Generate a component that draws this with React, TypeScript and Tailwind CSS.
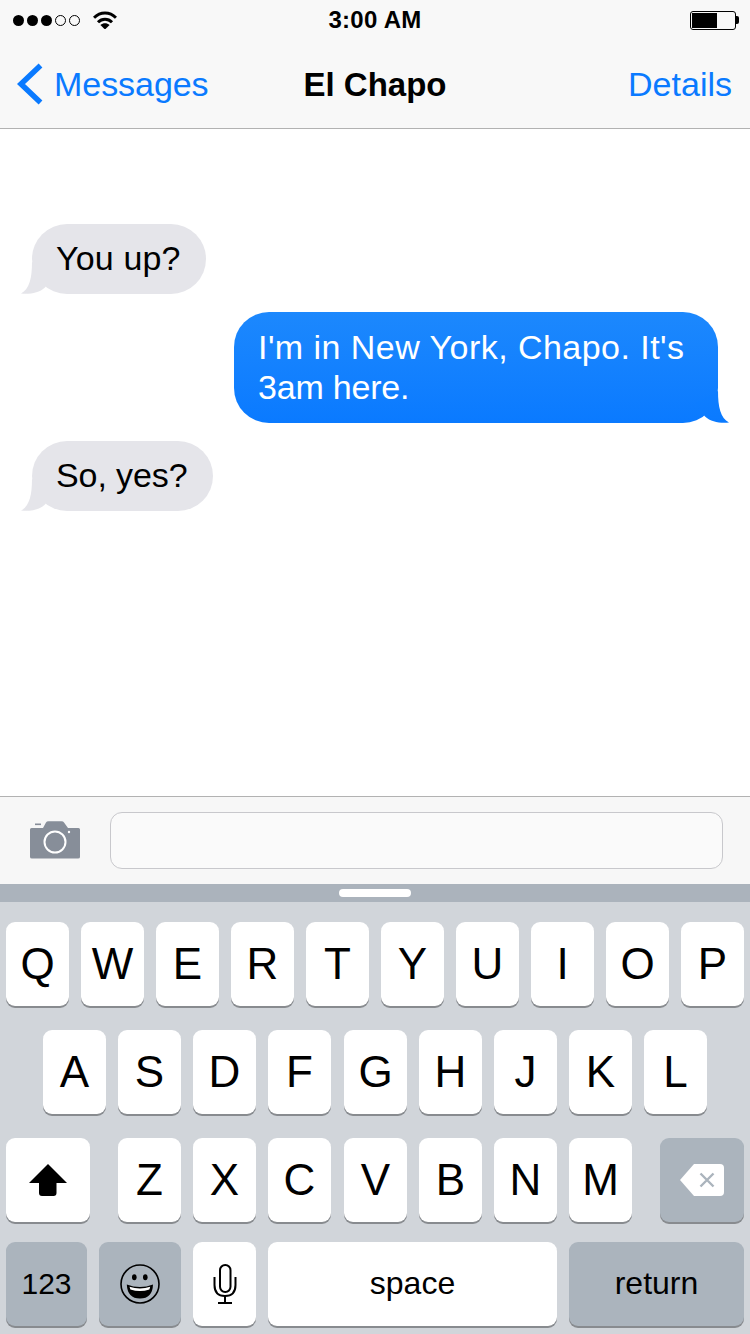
const ROW1 = ["Q", "W", "E", "R", "T", "Y", "U", "I", "O", "P"];
const ROW2 = ["A", "S", "D", "F", "G", "H", "J", "K", "L"];
const ROW3 = ["Z", "X", "C", "V", "B", "N", "M"];

function Key({ label, className = "" }: { label: string; className?: string }) {
  return (
    <div className={`flex h-[84px] w-[63px] items-center justify-center rounded-[9px] bg-white text-[44px] leading-none text-black shadow-[0_2px_0_#888b8f] ${className}`}>
      {label}
    </div>
  );
}

function FnKey({ className, children }: { className: string; children: React.ReactNode }) {
  return (
    <div className={`flex h-[84px] items-center justify-center rounded-[9px] shadow-[0_2px_0_#888b8f] ${className}`}>
      {children}
    </div>
  );
}

// the tail shares the bubble's colour at the height where it overlaps it
function Tail({ id, from, to, className }: { id: string; from: string; to: string; className: string }) {
  return (
    <svg className={`absolute bottom-0 ${className}`} width="40" height="40" viewBox="0 0 40 40">
      <defs>
        <linearGradient id={id} x1="0" y1="0" x2="0" y2="40" gradientUnits="userSpaceOnUse">
          <stop offset="0" stopColor={from} />
          <stop offset="1" stopColor={to} />
        </linearGradient>
      </defs>
      <path d="M11 8C11 24 8.5 35 0 39.6C9 40.5 18 39 24 33.5L34 20Z" fill={`url(#${id})`} />
    </svg>
  );
}

function Incoming({ id, text, className }: { id: string; text: string; className: string }) {
  return (
    <div className={`relative ml-[32px] h-[70px] rounded-[35px] bg-[#e5e5ea] pl-[24px] text-[34px] leading-[68px] text-black ${className}`}>
      <Tail id={id} from="#e5e5ea" to="#e5e5ea" className="left-[-11px]" />
      <span className="relative">{text}</span>
    </div>
  );
}

function StatusBar() {
  return (
    <div className="grid h-[40px] grid-cols-[1fr_auto_1fr] items-center">
      <div className="flex items-center pl-[13px]">
        <div className="flex gap-[3px]">
          <span className="h-[11px] w-[11px] rounded-full bg-black" />
          <span className="h-[11px] w-[11px] rounded-full bg-black" />
          <span className="h-[11px] w-[11px] rounded-full bg-black" />
          <span className="h-[11px] w-[11px] rounded-full border border-black" />
          <span className="h-[11px] w-[11px] rounded-full border border-black" />
        </div>
        <svg className="ml-[13px]" width="24" height="18" viewBox="0 0 24 18">
          <path d="M1 6.8C7.2 .4 16.8 .4 23 6.8" fill="none" stroke="#000" strokeWidth="3" />
          <path d="M5 11.2C9 7.2 15 7.2 19 11.2" fill="none" stroke="#000" strokeWidth="3" />
          <path d="M7.4 14L12 18.5L16.6 14C13.8 11.6 10.2 11.6 7.4 14Z" fill="#000" />
        </svg>
      </div>
      <div className="text-[24px] font-bold leading-none tracking-[0.3px] text-black">3:00 AM</div>
      <div className="flex items-center justify-end pr-[11px]">
        <div className="h-[19px] w-[46px] rounded-[3px] border border-black p-[1px]">
          <div className="h-full w-[25px] bg-black" />
        </div>
        <div className="h-[8px] w-[3px] rounded-r-[2px] bg-black" />
      </div>
    </div>
  );
}

function Camera() {
  return (
    <svg width="50" height="38" viewBox="0 0 50 38" className="mb-[2px] shrink-0">
      <path
        d="M1.5 7H13L16 1.5Q16.7 .2 18.5 .2H31.5Q33.3 .2 34 1.5L38 7H48.5Q50 7 50 8.5V36Q50 37.5 48 37.5H2Q0 37.5 0 36V8.5Q0 7 1.5 7Z"
        fill="#878e99"
      />
      <rect x="5" y="2.5" width="6" height="1.6" fill="#878e99" />
      <circle cx="25" cy="21" r="10.5" fill="none" stroke="#fff" strokeWidth="2" />
      <circle cx="39" cy="11" r="1.2" fill="#fff" />
    </svg>
  );
}

export default function App() {
  return (
    <div className="flex h-[1334px] w-[750px] flex-col overflow-hidden bg-white font-['Liberation_Sans',Arial,sans-serif]">
      <header className="h-[129px] border-b border-[#b2b2b2] bg-[#f8f8f8]">
        <StatusBar />
        <nav className="grid h-[88px] grid-cols-[1fr_auto_1fr] items-center">
          <div className="flex items-center pl-[17px] text-[34px] leading-none text-[#0a7aff]">
            <svg width="26" height="42" viewBox="0 0 26 42">
              <path d="M23.5 2.5L4 21L23.5 39.5" fill="none" stroke="#0a7aff" strokeWidth="5.5" />
            </svg>
            <span className="ml-[11px] tracking-[-0.05px]">Messages</span>
          </div>
          <div className="text-[33px] font-bold leading-none text-black">El Chapo</div>
          <div className="pr-[18px] text-right text-[34px] leading-none text-[#0a7aff]">Details</div>
        </nav>
      </header>

      <main className="flex-1 pt-[95px]">
        <Incoming id="tail-up" text="You up?" className="w-[174px] tracking-[0.15px]" />
        <div className="relative ml-auto mr-[32px] mt-[18px] h-[111px] w-[484px] rounded-[35px] bg-gradient-to-b from-[#1c88fd] to-[#0a7aff] px-[24px] py-[15px] text-[34px] leading-[40px] text-white">
          <Tail id="tail-out" from="#107fff" to="#0a7aff" className="right-[-11px] -scale-x-100" />
          <span className="relative block tracking-[0.46px]">I'm in New York, Chapo. It's</span>
          <span className="relative block tracking-[-0.2px]">3am here.</span>
        </div>
        <div className="mt-[18px]">
          <Incoming id="tail-yes" text="So, yes?" className="w-[181px] tracking-[-0.1px]" />
        </div>
      </main>

      <div className="flex h-[88px] items-center gap-[30px] border-t border-[#b2b2b2] bg-[#f7f7f7] pl-[30px] pr-[27px]">
        <Camera />
        <div className="h-[57px] flex-1 rounded-[12px] border border-[#c8c8cc] bg-[#fafafa]" />
      </div>

      <div className="flex h-[18px] items-center justify-center bg-[#abb3bc]">
        <div className="h-[8px] w-[72px] rounded-full bg-white" />
      </div>

      <div className="flex flex-1 grow-0 basis-[432px] flex-col bg-[#d1d5da] pt-[20px]">
        <div className="flex justify-center gap-[12px]">
          {ROW1.map((k) => (
            <Key key={k} label={k} />
          ))}
        </div>
        <div className="mt-[24px] flex gap-[12px] pl-[43px]">
          {ROW2.map((k) => (
            <Key key={k} label={k} className={k === "F" ? "mr-[1px]" : ""} />
          ))}
        </div>
        <div className="mt-[24px] flex gap-[28px] px-[6px]">
          <FnKey className="w-[84px] bg-white">
            <svg width="38" height="32" viewBox="0 0 38 32">
              <path d="M19 0L38 19H27.5V29Q27.5 32 24.5 32H13Q10 32 10 29V19H0Z" fill="#000" />
            </svg>
          </FnKey>
          <div className="flex gap-[12px]">
            {ROW3.map((k) => (
              <Key key={k} label={k} className={k === "C" ? "mr-[1px]" : ""} />
            ))}
          </div>
          <FnKey className="w-[84px] bg-[#abb4bd]">
            <svg width="44" height="32" viewBox="0 0 44 32">
              <path d="M0 16L14 0H40Q44 0 44 4V28Q44 32 40 32H14Z" fill="#fff" />
              <path d="M20.5 9.5L33.5 22.5M33.5 9.5L20.5 22.5" stroke="#abb4bd" strokeWidth="2.4" />
            </svg>
          </FnKey>
        </div>
        <div className="mt-[20px] flex gap-[12px] px-[6px]">
          <FnKey className="w-[81px] bg-[#abb4bd] text-[30px] leading-none text-black">123</FnKey>
          <FnKey className="w-[82px] bg-[#abb4bd]">
            <svg width="40" height="40" viewBox="0 0 40 40">
              <circle cx="20" cy="20" r="19" fill="none" stroke="#000" strokeWidth="1.6" />
              <ellipse cx="14.3" cy="13.3" rx="2.3" ry="3" fill="#000" />
              <ellipse cx="25.3" cy="13.3" rx="2.3" ry="3" fill="#000" />
              <path d="M6.8 20.5Q20 25.5 33 20.5Q32.5 34.5 20 34.5Q7.5 34.5 6.8 20.5Z" fill="#000" />
              <path d="M9.5 22.8Q20 26.4 30.2 22.8L29.4 25.4Q20 28.8 10.4 25.4Z" fill="#fff" />
            </svg>
          </FnKey>
          <FnKey className="w-[63px] bg-white">
            <svg width="24" height="40" viewBox="0 0 24 40">
              <rect x="7" y="1" width="10.5" height="27" rx="5.2" fill="none" stroke="#000" strokeWidth="2" />
              <path d="M1.5 13V21Q1.5 32 12 32Q22.5 32 22.5 21V13" fill="none" stroke="#000" strokeWidth="2" />
              <path d="M12 32V39M5 39H19" fill="none" stroke="#000" strokeWidth="2" />
            </svg>
          </FnKey>
          <FnKey className="w-[289px] bg-white pb-[2px] text-[32px] leading-none text-black">space</FnKey>
          <FnKey className="w-[175px] bg-[#abb4bd] pb-[2px] text-[32px] leading-none text-black">return</FnKey>
        </div>
      </div>
    </div>
  );
}
